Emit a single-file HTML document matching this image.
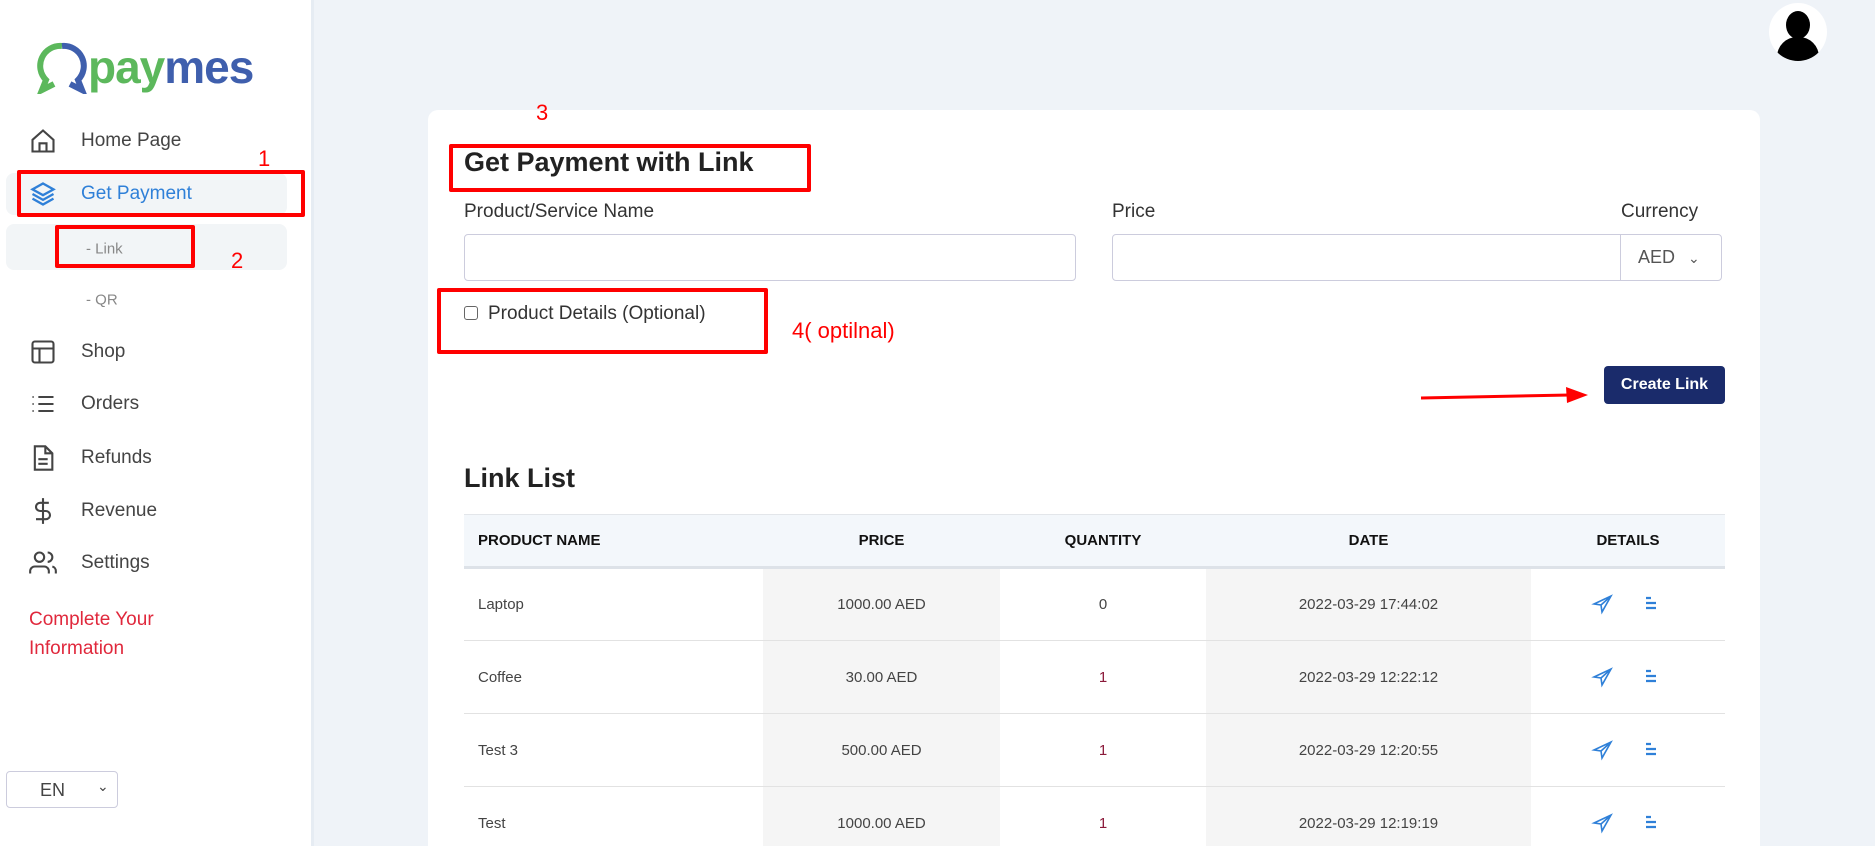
<!DOCTYPE html>
<html><head><meta charset="utf-8"><style>
*{box-sizing:border-box;margin:0;padding:0}
html{width:1875px;height:846px;overflow:hidden}
body{width:1875px;height:846px;overflow:hidden;background:#eff3f8;font-family:"Liberation Sans",sans-serif;position:relative;color:#222}
.side{position:absolute;left:0;top:0;width:311px;height:846px;background:#fff}
.abs{position:absolute}
.item{position:absolute;left:81px;font-size:19px;color:#444;transform:translateY(-50%)}
.ico{position:absolute;left:29px;width:28px;height:28px;transform:translateY(-50%)}
.red{position:absolute;border:4px solid #f00;border-radius:2px}
.rt{position:absolute;color:#f00;font-size:22px}
.card{position:absolute;left:428px;top:110px;width:1332px;height:736px;background:#fff;border-radius:10px 10px 0 0}
.lbl{position:absolute;font-size:19px;color:#333}
.inp{position:absolute;border:1px solid #ccd;border-radius:4px;background:#fff}
table{position:absolute;left:464px;top:514px;width:1261px;border-collapse:collapse;font-size:15px}
th{height:53px;background:#f3f7fb;font-weight:bold;font-size:15px;color:#111;border-bottom:3px solid #dde2e8;border-top:1px solid #e3e6ea}
td{height:73px;border-bottom:1px solid #e2e2e2;text-align:center;color:#444}
td.g{background:#f5f5f5}
.q1{color:#8b1a3a}
</style></head><body>
<div class="side">
 <svg class="abs" style="left:36px;top:42px" width="52" height="52" viewBox="0 0 52 52"><path d="M26 4 A20 20 0 0 0 10 38 L6 48 L18 42" fill="none" stroke="#5cb85c" stroke-width="6"/><path d="M26 4 A20 20 0 0 1 42 38 L46 48 L34 42" fill="none" stroke="#3f5fad" stroke-width="6"/></svg>
 <div class="abs" style="left:88px;top:40px;font-size:46px;font-weight:bold;letter-spacing:-1px"><span style="color:#5cb85c">pay</span><span style="color:#3f5fad">mes</span></div>
 <svg class="ico" style="top:141px" viewBox="0 0 24 24" fill="none" stroke="#444" stroke-width="1.8"><path d="M3 11 L12 3 L21 11 V21 H3 Z M9 21 V14 H15 V21"/></svg>
 <div class="item" style="top:141px">Home Page</div>
 <div class="abs" style="left:6px;top:173px;width:281px;height:42px;background:#f2f5f7;border-radius:8px"></div>
 <svg class="ico" style="top:194px" viewBox="0 0 24 24" fill="none" stroke="#2f80d8" stroke-width="2"><path d="M12 3 L21 8 L12 13 L3 8 Z M3 12 L12 17 L21 12 M3 16 L12 21 L21 16"/></svg>
 <div class="item" style="top:194px;color:#2f80d8">Get Payment</div>
 <div class="abs" style="left:6px;top:224px;width:281px;height:46px;background:#f2f5f7;border-radius:8px"></div>
 <div class="item" style="top:249px;left:86px;font-size:15px;color:#888">- Link</div>
 <div class="item" style="top:300px;left:86px;font-size:15px;color:#888">- QR</div>
 <svg class="ico" style="top:352px" viewBox="0 0 24 24" fill="none" stroke="#444" stroke-width="1.8"><rect x="3" y="3" width="18" height="18" rx="2"/><path d="M3 9 H21 M9 9 V21"/></svg>
 <div class="item" style="top:352px">Shop</div>
 <svg class="ico" style="top:404px" viewBox="0 0 24 24" fill="none" stroke="#444" stroke-width="1.8"><path d="M8 6 H21 M8 12 H21 M8 18 H21 M3 6 H4 M3 12 H4 M3 18 H4"/></svg>
 <div class="item" style="top:404px">Orders</div>
 <svg class="ico" style="top:458px" viewBox="0 0 24 24" fill="none" stroke="#444" stroke-width="1.8"><path d="M5 2 H14 L20 8 V22 H5 Z M14 2 V8 H20 M8 13 H16 M8 17 H16"/></svg>
 <div class="item" style="top:458px">Refunds</div>
 <svg class="ico" style="top:511px" viewBox="0 0 24 24" fill="none" stroke="#444" stroke-width="1.8"><path d="M12 1 V23 M17 5 H9.5 A3.5 3.5 0 0 0 9.5 12 H14.5 A3.5 3.5 0 0 1 14.5 19 H6"/></svg>
 <div class="item" style="top:511px">Revenue</div>
 <svg class="ico" style="top:563px" viewBox="0 0 24 24" fill="none" stroke="#444" stroke-width="1.8"><circle cx="9" cy="7" r="4"/><path d="M1 21 V19 A4 4 0 0 1 5 15 H13 A4 4 0 0 1 17 19 V21 M16 3 A4 4 0 0 1 16 11 M23 21 V19 A4 4 0 0 0 20 15"/></svg>
 <div class="item" style="top:563px">Settings</div>
 <div class="abs" style="left:29px;top:605px;font-size:19px;line-height:29px;color:#e0283c">Complete Your<br>Information</div>
 <div class="abs" style="left:6px;top:771px;width:112px;height:37px;border:1px solid #ccd;border-radius:4px;font-size:18px;color:#444;padding:8px 0 0 33px">EN <span style="position:absolute;left:90px;top:6px;font-size:14px">⌄</span></div>
</div>
<div style="position:absolute;left:311px;top:0;width:3px;height:846px;background:#e6ecf3"></div>
<div class="abs" style="left:1769px;top:3px;width:58px;height:58px;border-radius:50%;background:#fff;overflow:hidden">
 <div class="abs" style="left:17px;top:8px;width:24px;height:28px;border-radius:50%;background:#000"></div>
 <div class="abs" style="left:8px;top:34px;width:42px;height:30px;border-radius:20px 20px 0 0;background:#000"></div>
</div>
<div class="card"></div>
<div class="abs" style="left:464px;top:147px;font-size:27px;font-weight:bold;color:#222">Get Payment with Link</div>
<div class="lbl" style="left:464px;top:201px">Product/Service Name</div>
<div class="lbl" style="left:1112px;top:201px">Price</div>
<div class="lbl" style="left:1621px;top:201px">Currency</div>
<div class="inp" style="left:464px;top:234px;width:612px;height:47px"></div>
<div class="inp" style="left:1112px;top:234px;width:610px;height:47px"></div>
<div class="abs" style="left:1620px;top:235px;width:1px;height:45px;background:#ccd"></div>
<div class="abs" style="left:1638px;top:247px;font-size:18px;color:#555">AED <span style="font-size:14px;margin-left:8px">⌄</span></div>
<div class="abs" style="left:464px;top:306px;width:14px;height:14px;border:1px solid #666;border-radius:3px"></div>
<div class="lbl" style="left:488px;top:303px">Product Details (Optional)</div>
<div class="abs" style="left:1604px;top:366px;width:121px;height:38px;background:#1a2b6b;border-radius:4px;color:#fff;font-size:16px;font-weight:bold;text-align:center;line-height:38px">Create Link</div>
<div class="abs" style="left:464px;top:463px;font-size:27px;font-weight:bold;color:#222">Link List</div>
<table>
<tr><th style="text-align:left;padding-left:14px;width:299px">PRODUCT NAME</th><th style="width:237px">PRICE</th><th style="width:206px">QUANTITY</th><th style="width:325px">DATE</th><th>DETAILS</th></tr>
<tr><td style="text-align:left;padding-left:14px">Laptop</td><td class="g">1000.00 AED</td><td>0</td><td class="g">2022-03-29 17:44:02</td><td></td></tr>
<tr><td style="text-align:left;padding-left:14px">Coffee</td><td class="g">30.00 AED</td><td class="q1">1</td><td class="g">2022-03-29 12:22:12</td><td></td></tr>
<tr><td style="text-align:left;padding-left:14px">Test 3</td><td class="g">500.00 AED</td><td class="q1">1</td><td class="g">2022-03-29 12:20:55</td><td></td></tr>
<tr><td style="text-align:left;padding-left:14px">Test</td><td class="g">1000.00 AED</td><td class="q1">1</td><td class="g">2022-03-29 12:19:19</td><td></td></tr>
</table>
<svg class="abs" style="left:0;top:0" width="1875" height="846">
<g fill="none" stroke="#2f80d8" stroke-width="1.6">
<path d="M1594 604 L1611 596 L1602 612 L1601 605 Z M1601 605 L1611 596"/>
<path d="M1594 677 L1611 669 L1602 685 L1601 678 Z M1601 678 L1611 669"/>
<path d="M1594 750 L1611 742 L1602 758 L1601 751 Z M1601 751 L1611 742"/>
<path d="M1594 823 L1611 815 L1602 831 L1601 824 Z M1601 824 L1611 815"/>
</g>
<g stroke="#2f80d8" stroke-width="2.2">
<path d="M1646 598 H1651 M1646 603 H1656 M1646 608 H1656"/>
<path d="M1646 671 H1651 M1646 676 H1656 M1646 681 H1656"/>
<path d="M1646 744 H1651 M1646 749 H1656 M1646 754 H1656"/>
<path d="M1646 817 H1651 M1646 822 H1656 M1646 827 H1656"/>
</g>
<path d="M1421 398 L1570 395" stroke="#f00" stroke-width="3"/>
<path d="M1588 395 L1566 387 L1567 403 Z" fill="#f00"/>
</svg>
<div class="red" style="left:17px;top:170px;width:288px;height:47px"></div>
<div class="rt" style="left:258px;top:146px">1</div>
<div class="red" style="left:55px;top:225px;width:140px;height:43px"></div>
<div class="rt" style="left:231px;top:248px">2</div>
<div class="red" style="left:449px;top:144px;width:362px;height:48px"></div>
<div class="rt" style="left:536px;top:100px">3</div>
<div class="red" style="left:437px;top:288px;width:331px;height:66px"></div>
<div class="rt" style="left:792px;top:318px">4( optilnal)</div>
</body></html>
